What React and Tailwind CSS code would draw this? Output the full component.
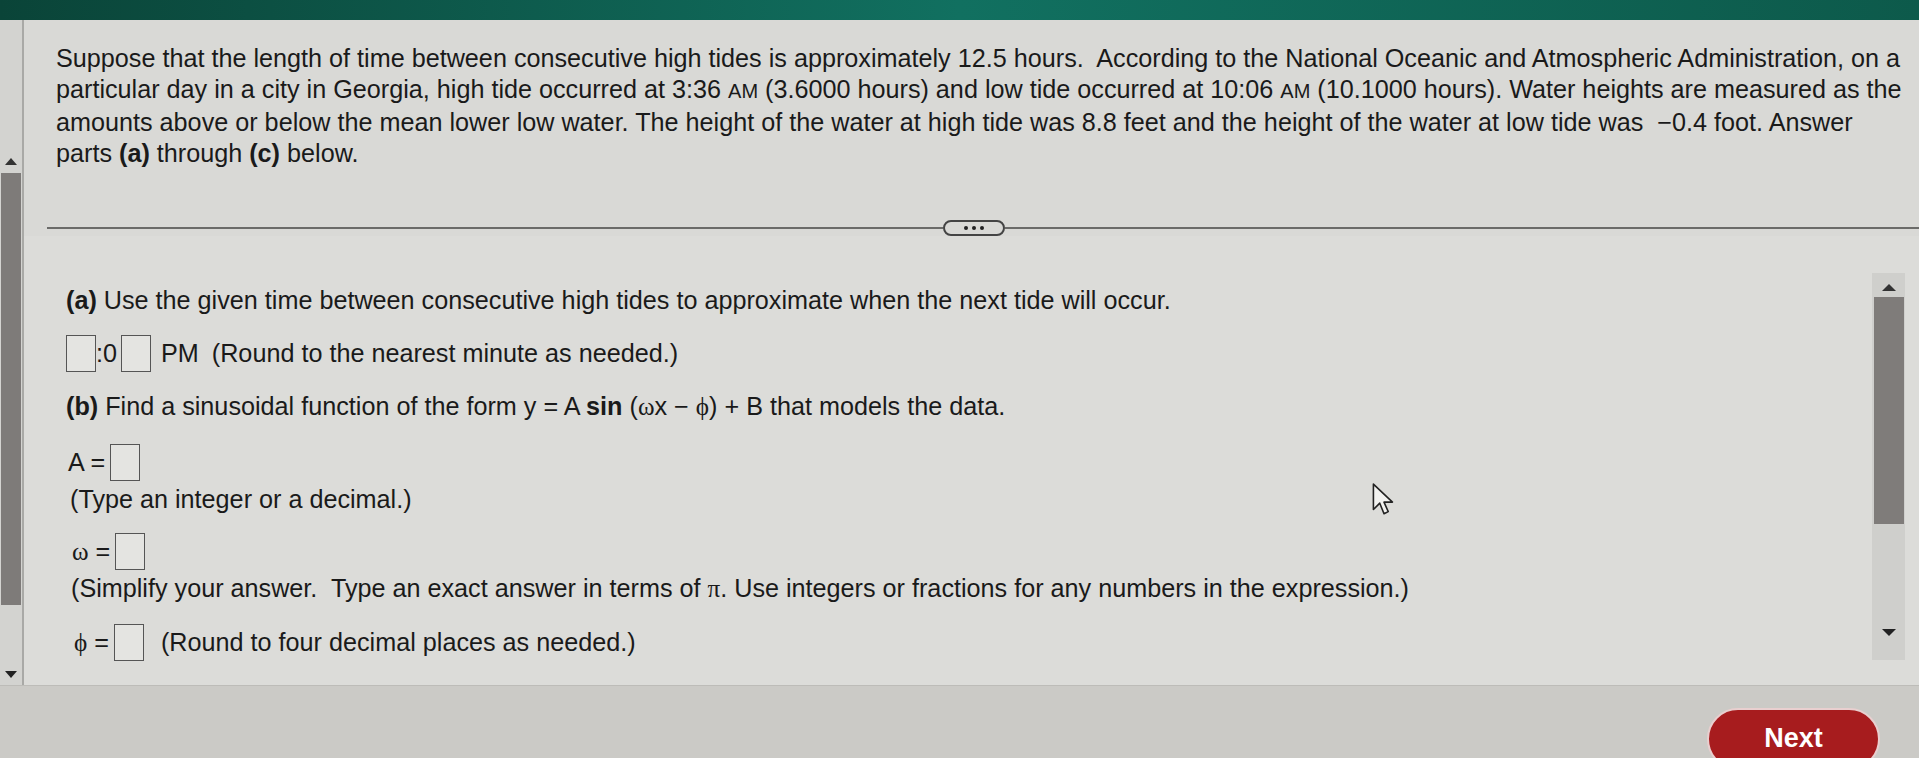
import React from 'react';

function Box({ className = '' }) {
  return <span className={`inline-block w-[30px] h-[37px] border border-[#555] bg-[#e4e4e1] ${className}`}></span>;
}

function Greek({ children }) {
  return <span className="font-['Liberation_Serif',serif]">{children}</span>;
}

function Cursor() {
  return (
    <svg className="absolute left-[1370px] top-[482px]" width="28" height="36" viewBox="0 0 24 34">
      <path
        d="M2 2 L2 26 L8 20 L12 30 L16 28 L12 19 L20 19 Z"
        fill="#f2f2f0"
        stroke="#222"
        strokeWidth="1.5"
        strokeLinejoin="round"
      />
    </svg>
  );
}

export default function App() {
  const lines = [
    <>Suppose that the length of time between consecutive high tides is approximately 12.5 hours.&nbsp; According to the National Oceanic and Atmospheric Administration, on a</>,
    <>particular day in a city in Georgia, high tide occurred at 3:36 <span className="text-[20px]">AM</span> (3.6000 hours) and low tide occurred at 10:06 <span className="text-[20px]">AM</span> (10.1000 hours). Water heights are measured as the</>,
    <>amounts above or below the mean lower low water. The height of the water at high tide was 8.8 feet and the height of the water at low tide was &nbsp;−0.4 foot. Answer</>,
    <>parts <b>(a)</b> through <b>(c)</b> below.</>,
  ];

  return (
    <div className="relative w-full h-[758px] overflow-hidden flex flex-col bg-[#d9d9d6] text-[#1a1a1a] font-['Liberation_Sans',Arial,sans-serif] text-[25.2px]">
      {/* top green bar */}
      <div className="h-[20px] bg-gradient-to-r from-[#0a4438] via-[#117060] to-[#0d5a4b]"></div>

      <div className="flex-1 flex">
        {/* left scrollbar */}
        <div className="w-[24px] flex flex-col items-center border-r-2 border-[#a9a9a6] bg-[#d3d3d0]">
          <div className="h-[138px]"></div>
          <div className="w-0 h-0 border-l-[6px] border-r-[6px] border-b-[7px] border-l-transparent border-r-transparent border-b-[#333]"></div>
          <div className="mt-[8px] w-[20px] h-[432px] bg-[#7e7b79]"></div>
          <div className="mt-[66px] w-0 h-0 border-l-[6px] border-r-[6px] border-t-[7px] border-l-transparent border-r-transparent border-t-[#222]"></div>
        </div>

        <div className="flex-1 flex flex-col">
          {/* problem text */}
          <div className="pl-[32px] pt-[23px] leading-[31px]">
            {lines.map((l, i) => (
              <div key={i} className="whitespace-nowrap">{l}</div>
            ))}
          </div>

          {/* divider */}
          <div className="mt-[51px] flex items-center pl-[23px]">
            <div className="w-[896px] h-[2px] bg-[#6b6b69]"></div>
            <div className="w-[62px] h-[16px] rounded-full border-2 border-[#444] flex items-center justify-center gap-[4px]">
              <span className="w-[4px] h-[4px] rounded-full bg-[#222]"></span>
              <span className="w-[4px] h-[4px] rounded-full bg-[#222]"></span>
              <span className="w-[4px] h-[4px] rounded-full bg-[#222]"></span>
            </div>
            <div className="flex-1 h-[2px] bg-[#6b6b69]"></div>
          </div>

          {/* question pane */}
          <div className="flex-1 flex bg-[#dcdcd9]">
            <div className="flex-1 pl-[42px] leading-[31px]">
              <div className="mt-[49px] whitespace-nowrap">
                <b>(a)</b> Use the given time between consecutive high tides to approximate when the next tide will occur.
              </div>
              <div className="mt-[19px] flex items-center whitespace-nowrap">
                <Box />
                <span>:0</span>
                <Box className="ml-[4px]" />
                <span className="ml-[10px]">PM</span>
                <span className="ml-[13px]">(Round to the nearest minute as needed.)</span>
              </div>
              <div className="mt-[19px] whitespace-nowrap">
                <b>(b)</b> Find a sinusoidal function of the form y = A <b>sin</b> (<Greek>ω</Greek>x − <Greek>ϕ</Greek>) + B that models the data.
              </div>
              <div className="mt-[22px] flex items-center whitespace-nowrap">
                <span className="ml-[2px]">A =</span>
                <Box className="ml-[5px]" />
              </div>
              <div className="mt-[3px] whitespace-nowrap ml-[4px]">(Type an integer or a decimal.)</div>
              <div className="mt-[18px] flex items-center whitespace-nowrap">
                <span className="ml-[6px]"><Greek>ω</Greek> =</span>
                <Box className="ml-[5px]" />
              </div>
              <div className="mt-[3px] whitespace-nowrap ml-[5px]">
                (Simplify your answer.&nbsp; Type an exact answer in terms of <Greek>π</Greek>. Use integers or fractions for any numbers in the expression.)
              </div>
              <div className="mt-[20px] flex items-center whitespace-nowrap">
                <span className="ml-[8px]"><Greek>ϕ</Greek> =</span>
                <Box className="ml-[5px]" />
                <span className="ml-[17px]">(Round to four decimal places as needed.)</span>
              </div>
            </div>

            {/* right scrollbar */}
            <div className="w-[33px] mr-[14px] mt-[37px] h-[387px] bg-[#cfcfcc] flex flex-col items-center">
              <div className="mt-[11px] w-0 h-0 border-l-[7px] border-r-[7px] border-b-[7px] border-l-transparent border-r-transparent border-b-[#333]"></div>
              <div className="mt-[6px] w-[30px] h-[227px] bg-[#7f7c7a]"></div>
              <div className="mt-[105px] w-0 h-0 border-l-[7px] border-r-[7px] border-t-[7px] border-l-transparent border-r-transparent border-t-[#222]"></div>
            </div>
          </div>
        </div>
      </div>

      {/* footer */}
      <div className="h-[73px] bg-[#cbcac6] border-t border-[#bdbcb8] flex justify-end pr-[39px] pt-[22px]">
        <button className="w-[173px] h-[62px] rounded-full bg-[#a71c1e] border-2 border-[#e9cfcf] text-white font-bold text-[27px] pb-[2px] flex items-center justify-center">
          Next
        </button>
      </div>

      <Cursor />
    </div>
  );
}
